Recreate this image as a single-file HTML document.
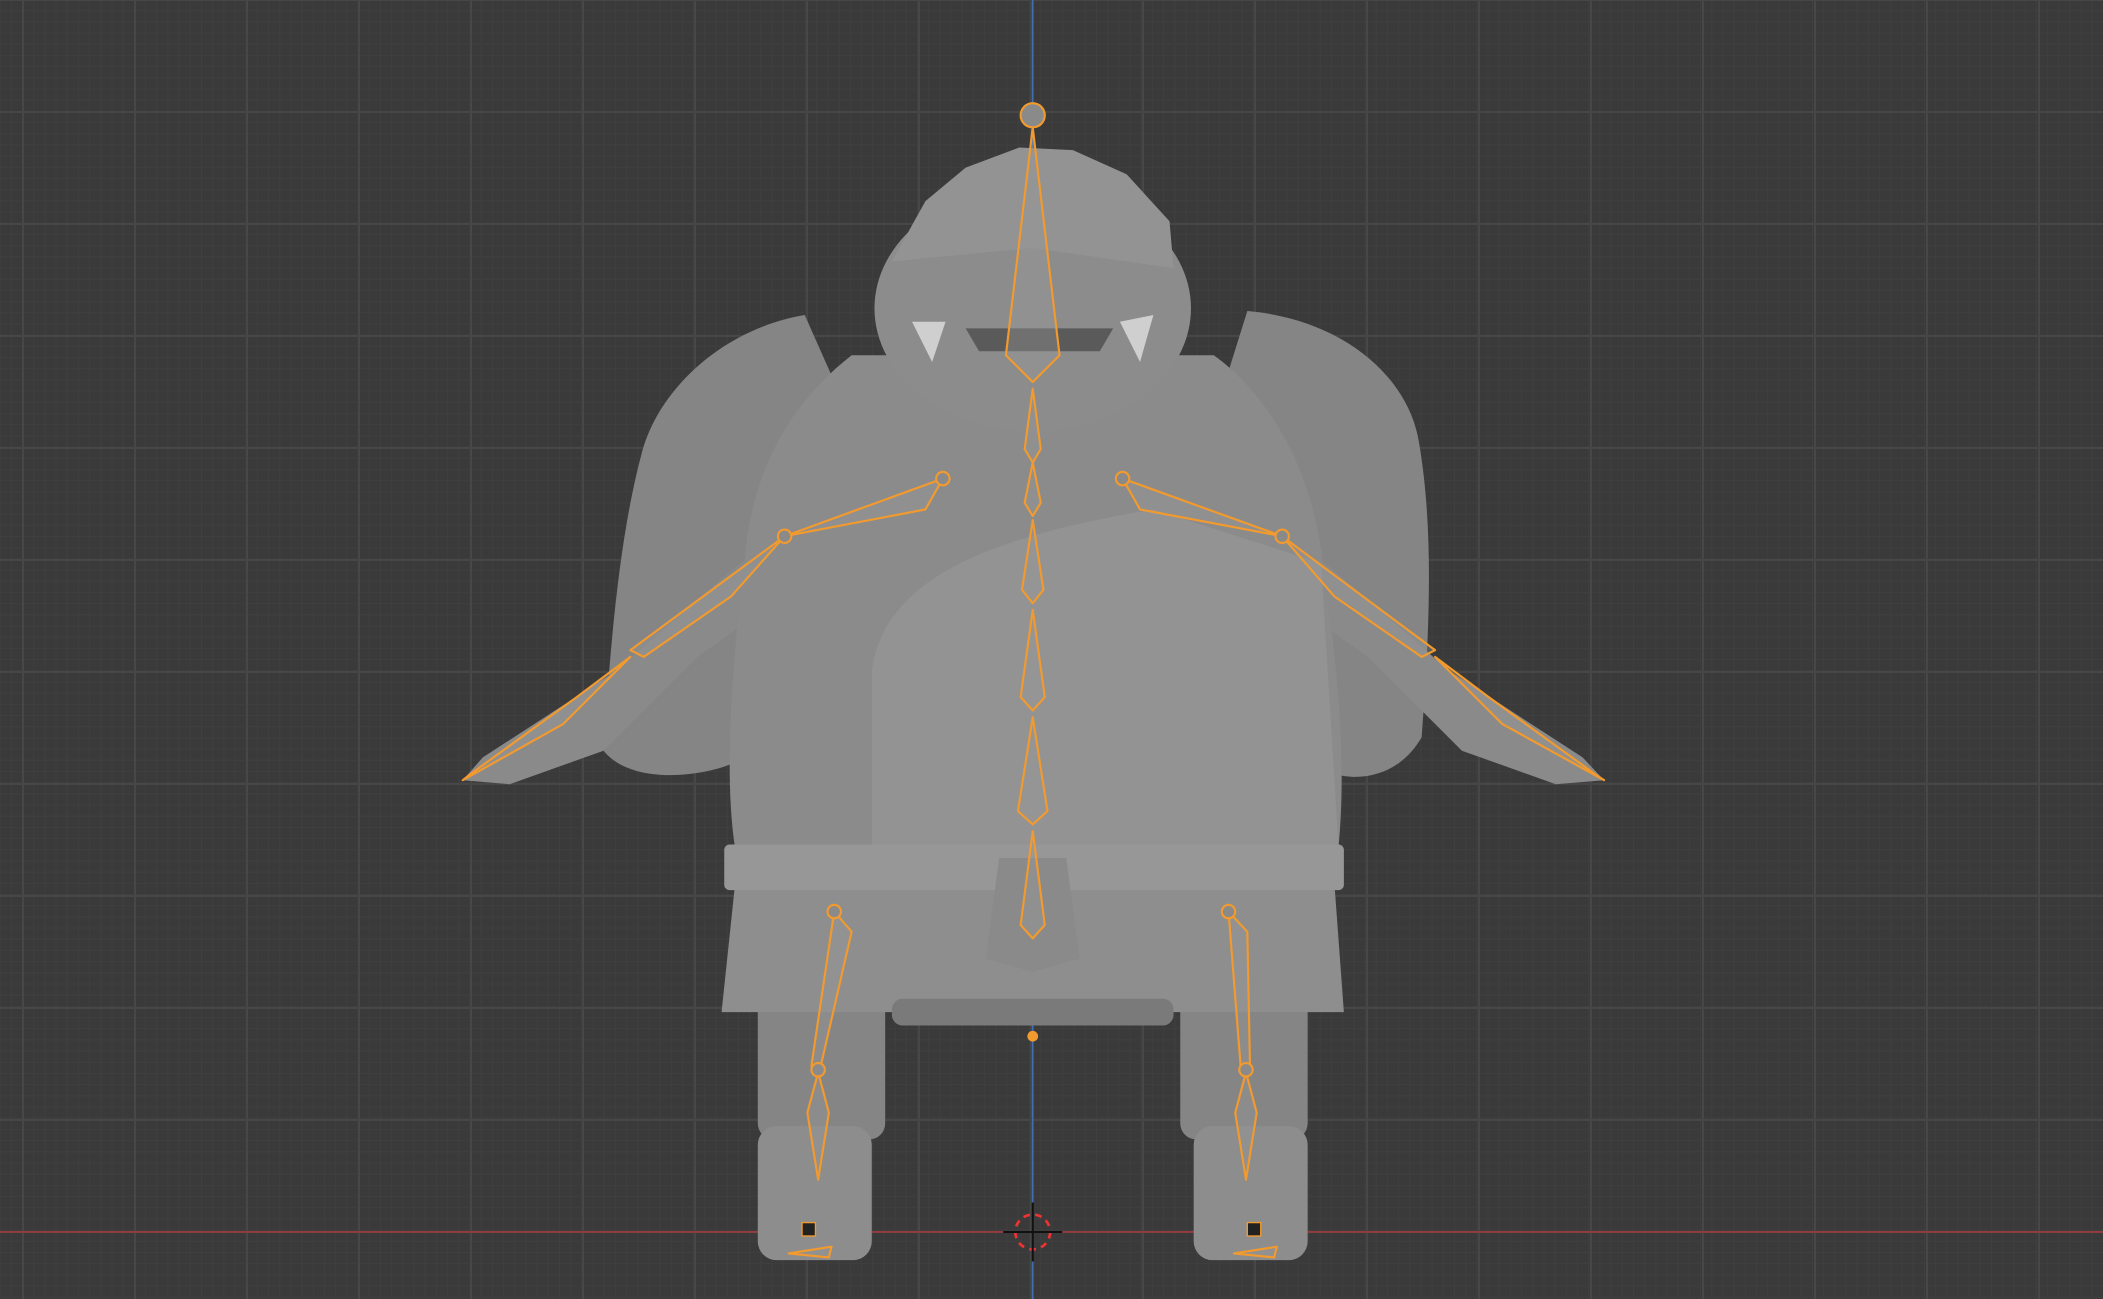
<!DOCTYPE html>
<html><head><meta charset="utf-8"><style>
html,body{margin:0;padding:0;width:2103px;height:1299px;overflow:hidden;background:#3a3a3a}
#g{position:absolute;left:0;top:0;width:2103px;height:1299px;
background-image:
linear-gradient(to right,#474747 0,#474747 2px,transparent 2px),
linear-gradient(to bottom,#474747 0,#474747 2px,transparent 2px),
linear-gradient(to right,#3f3f3f 0,#3f3f3f 1px,transparent 1px),
linear-gradient(to bottom,#3f3f3f 0,#3f3f3f 1px,transparent 1px);
background-size:112px 112px,112px 112px,11.2px 11.2px,11.2px 11.2px;
background-position:22px 0,0 -1px,22px 0,0 -1px}
svg{position:absolute;left:0;top:0}
</style></head><body>
<div id="g"></div>
<svg width="2103" height="1299" viewBox="0 0 1568 969" preserveAspectRatio="none">
<line x1="770" y1="0" x2="770" y2="969" stroke="#3f6fb0" stroke-width="1.2"/>
<line x1="0" y1="919" x2="1568" y2="919" stroke="#a0383e" stroke-width="1.2"/>
<!-- wings -->
<path d="M600,235 C540,245 490,290 478,340 C462,400 455,480 450,560 C470,585 520,580 545,570 L570,420 L620,280 Z" fill="#858585"/>
<path d="M930,232 C1000,238 1050,280 1058,330 C1070,400 1065,480 1060,550 C1040,585 1000,585 980,570 L950,420 L915,280 Z" fill="#858585"/>
<!-- arms -->
<path d="M590,390 L540,430 L460,500 L360,565 L345,582 L380,585 L450,560 L520,490 L590,440 Z" fill="#8a8a8a"/>
<path d="M950,390 L1000,430 L1080,500 L1180,565 L1196,582 L1160,585 L1090,560 L1020,490 L950,440 Z" fill="#8a8a8a"/>
<!-- legs & feet -->
<rect x="565" y="740" width="95" height="110" rx="12" fill="#858585"/>
<rect x="880" y="740" width="95" height="110" rx="12" fill="#858585"/>
<rect x="565" y="840" width="85" height="100" rx="14" fill="#8d8d8d"/>
<rect x="890" y="840" width="85" height="100" rx="14" fill="#8d8d8d"/>
<!-- skirt -->
<path d="M548,660 L995,660 L1002,755 L538,755 Z" fill="#8e8e8e"/>
<rect x="665" y="745" width="210" height="20" rx="8" fill="#7a7a7a"/>
<!-- torso -->
<path d="M635,265 C590,300 560,350 555,420 C545,500 540,580 548,632 L998,632 C1005,560 995,480 985,410 C975,340 940,290 905,265 Z" fill="#8b8b8b"/>
<path d="M650,500 C660,430 740,400 860,380 L985,420 L998,632 L650,632 Z" fill="#939393"/>
<!-- belt -->
<rect x="540" y="630" width="462" height="34" rx="4" fill="#979797"/>
<path d="M745,640 L795,640 L805,715 L770,725 L735,715 Z" fill="#8a8a8a"/>
<!-- head -->
<ellipse cx="770" cy="230" rx="118" ry="92" fill="#8c8c8c"/>
<path d="M665,195 L690,150 L720,125 L760,110 L800,112 L840,130 L872,165 L875,200 L770,185 Z" fill="#939393"/>
<path d="M680,240 L695,270 L705,240 Z M835,240 L850,270 L860,235 Z" fill="#cfcfcf"/>
<path d="M720,245 L830,245 L820,262 L730,262 Z" fill="#5a5a5a"/>
<!-- bones -->
<g fill="#9a9a9a" fill-opacity="0.35" stroke="#f29a2e" stroke-width="1.6" stroke-linejoin="round">
<path d="M770,95 L790,265 L770,285 L750,265 Z"/>
<path d="M770,290 L776,335 L770,345 L764,335 Z"/>
<path d="M770,345 L776,375 L770,385 L764,375 Z"/>
<path d="M770,388 L778,440 L770,450 L762,440 Z"/>
<path d="M770,455 L779,520 L770,530 L761,520 Z"/>
<path d="M770,535 L781,605 L770,615 L759,605 Z"/>
<path d="M770,620 L779,690 L770,700 L761,690 Z"/>
<path d="M703,357 L690,380 L585,400 Z"/>
<path d="M837,357 L850,380 L956,400 Z"/>
<path d="M585,400 L545,445 L480,490 L470,485 Z"/>
<path d="M956,400 L995,445 L1060,490 L1070,485 Z"/>
<path d="M470,490 L430,520 L350,578 L345,582 L420,540 Z"/>
<path d="M1070,490 L1110,520 L1190,578 L1196,582 L1120,540 Z"/>
<path d="M622,680 L635,695 L612,795 L605,795 Z"/>
<path d="M916,680 L930,695 L932,795 L925,795 Z"/>
<path d="M610,800 L618,830 L610,880 L602,830 Z"/>
<path d="M929,800 L937,830 L929,880 L921,830 Z"/>
<path d="M588,935 L620,930 L618,938 Z"/>
<path d="M920,935 L952,930 L950,938 Z"/>
</g>
<g fill="#8a8a8a" stroke="#f29a2e" stroke-width="1.6">
<circle cx="770" cy="86" r="9"/>
<circle cx="703" cy="357" r="5"/><circle cx="837" cy="357" r="5"/>
<circle cx="585" cy="400" r="5"/><circle cx="956" cy="400" r="5"/>
<circle cx="622" cy="680" r="5"/><circle cx="916" cy="680" r="5"/>
<circle cx="610" cy="798" r="5"/><circle cx="929" cy="798" r="5"/>
</g>
<rect x="598" y="912" width="10" height="10" fill="#222" stroke="#f29a2e"/>
<rect x="930" y="912" width="10" height="10" fill="#222" stroke="#f29a2e"/>
<circle cx="770" cy="773" r="4" fill="#f29a2e"/>
<circle cx="770" cy="919" r="13" fill="none" stroke="#e33" stroke-width="2" stroke-dasharray="5 4"/>
<line x1="748" y1="919" x2="792" y2="919" stroke="#111" stroke-width="1.5"/>
<line x1="770" y1="897" x2="770" y2="941" stroke="#111" stroke-width="1.5"/>
</svg>
</body></html>
